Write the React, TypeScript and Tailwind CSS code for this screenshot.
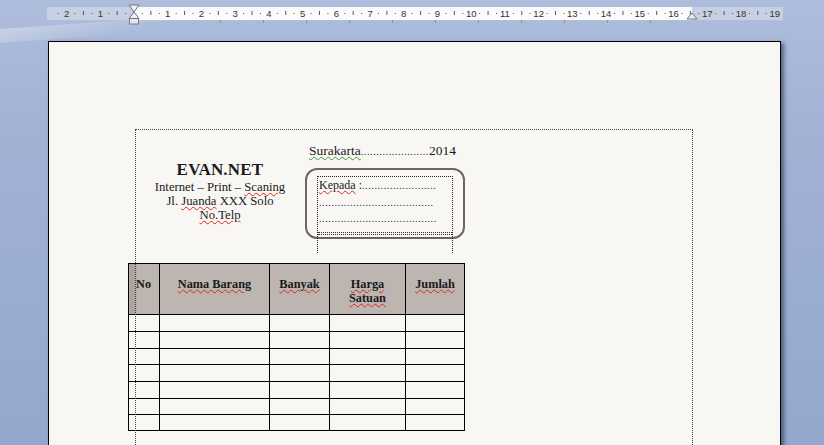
import React from 'react';

const CM = 33.72;
const ZERO = 134;

function Ruler() {
  const nums: number[] = [];
  for (let n = -2; n <= 19; n++) if (n !== 0) nums.push(n);
  const marks: { x: number; kind: 'dot' | 'tick' }[] = [];
  for (let q = -10; q <= 78; q++) {
    if (q % 4 === 0) continue;
    const x = ZERO + (q * CM) / 4;
    if (x < 50 || x > 781) continue;
    marks.push({ x, kind: q % 2 === 0 ? 'tick' : 'dot' });
  }
  const tabs = [220, 263, 306, 349, 392, 435, 478, 521, 564, 607, 650];
  return (
    <svg width="824" height="28" className="block">
      <rect x="47" y="7" width="736" height="13" fill="#c7d0e3" />
      <rect x="134" y="7" width="558" height="13" fill="#fbfbfb" />
      <line x1="47" y1="20.5" x2="783" y2="20.5" stroke="#b3bfd9" />
      {marks.map((m, i) =>
        m.kind === 'dot' ? (
          <rect key={i} x={m.x - 0.5} y={13} width="1" height="1" fill="#555" />
        ) : (
          <rect key={i} x={m.x - 0.5} y={11} width="1" height="4" fill="#555" />
        )
      )}
      {nums.map((n) => (
        <text
          key={n}
          x={ZERO + n * CM}
          y="16.5"
          textAnchor="middle"
          fontSize="9.5"
          fontFamily="'Liberation Sans', Arial, sans-serif"
          fill="#333"
        >
          {Math.abs(n)}
        </text>
      ))}
      {tabs.map((x) => (
        <rect key={x} x={x} y="20" width="1" height="3" fill="#8a8f9a" />
      ))}
      {/* left indent */}
      <polygon points="129,5 139,5 134,12" fill="#eef0f4" stroke="#6f7480" strokeWidth="1" />
      <polygon points="129,18.5 139,18.5 134,12" fill="#eef0f4" stroke="#6f7480" strokeWidth="1" />
      <rect x="129.5" y="18.5" width="9" height="5.5" fill="#dfe3ea" stroke="#6f7480" strokeWidth="1" />
      {/* right indent */}
      <polygon points="687,19 697,19 692,13" fill="#eef0f4" stroke="#6f7480" strokeWidth="1" />
    </svg>
  );
}

const squiggleRed = 'underline decoration-wavy decoration-[#e0261e] decoration-[1px] underline-offset-[1px]';
const squiggleGreen = 'underline decoration-wavy decoration-[#3a9a3a] decoration-[1px] underline-offset-[1px]';
const dots = 'text-[10px] tracking-[0.6px]';

const rowHeights = [17, 17, 16, 17, 17, 16, 16];

export default function App() {
  return (
    <div
      className="w-[824px] h-[445px] overflow-hidden relative bg-[linear-gradient(180deg,#aebddc_0%,#a1b2d5_30%,#95a7cd_100%)]"
      style={{ fontFamily: "'Liberation Serif', 'Times New Roman', serif" }}
    >
      <div className="absolute left-0 top-[22px] w-[200px] h-[14px] bg-[linear-gradient(170deg,rgba(255,255,255,0.35),rgba(255,255,255,0)_70%)] -skew-y-[4deg] pointer-events-none" />
      <Ruler />
      <div className="ml-[48px] mt-[13px] w-[733px] h-[460px] bg-[#f8f7f4] border-l border-t border-r border-black shadow-[3px_2px_4px_rgba(20,30,60,0.55)]">
        <div className="relative ml-[86px] mt-[87px] w-[558px] h-[400px]">
          <div className="flex text-[#1a1a1a]">
            <div className="w-[170px] pt-[31px] flex flex-col items-center">
              <div className="text-[17px] leading-[20px] font-bold tracking-[0.2px]">EVAN.NET</div>
              <div className="text-[12.7px] leading-[14px]">
                Internet – Print – <span className={squiggleRed}>Scaning</span>
              </div>
              <div className="text-[12.7px] leading-[14px]">
                Jl. <span className={squiggleRed}>Juanda</span> XXX Solo
              </div>
              <div className="text-[12.7px] leading-[14px]">
                <span className={squiggleRed}>No.Telp</span>
              </div>
            </div>
            <div className="pt-[14px] flex flex-col">
              <div className="pl-[4px] text-[13.5px] leading-[16px] whitespace-nowrap">
                <span className={squiggleGreen}>Surakarta</span>
                <span className={dots}>......................</span>
                2014
              </div>
              <div className="mt-[8px] w-[160px] h-[71px] rounded-[12px] border-2 border-[#6e6660] pt-[6px] pl-[10px]">
                <div className="w-[136px] h-[77px] border-l border-t border-r border-dotted border-[#222] flex flex-col">
                  <div className="pl-[1px] pt-[1px] text-[12px] leading-[14px] whitespace-nowrap">
                    <span className={squiggleRed}>Kepada</span> :<span className={dots}>........................</span>
                  </div>
                  <div className={`mt-[3px] pl-[1px] leading-[14px] whitespace-nowrap ${dots}`}>
                    .....................................
                  </div>
                  <div className={`mt-[2px] pl-[1px] leading-[14px] whitespace-nowrap ${dots}`}>
                    ......................................
                  </div>
                  <div className="mt-[6px] h-[3px] border-t border-b border-dotted border-[#333]" />
                </div>
              </div>
            </div>
          </div>

          <table className="mt-[24px] -ml-[7px] border-collapse border border-black text-[#1a1a1a]">
            <thead>
              <tr className="h-[51px] bg-[#bcb5b0] text-[12.3px] leading-[14px] font-bold">
                <th className="w-[31px] border border-black align-top pt-[13px] bg-[linear-gradient(90deg,#aaa39e_0px,#aaa39e_7px,#bcb5b0_7px)] pl-[7px] text-left">
                  No
                </th>
                <th className="w-[110px] border border-black align-top pt-[13px]">
                  <span className={squiggleRed}>Nama Barang</span>
                </th>
                <th className="w-[60px] border border-black align-top pt-[13px]">
                  <span className={squiggleRed}>Banyak</span>
                </th>
                <th className="w-[76px] border border-black align-top pt-[13px]">
                  <span className={squiggleRed}>Harga</span>
                  <br />
                  <span className={squiggleRed}>Satuan</span>
                </th>
                <th className="w-[59px] border border-black align-top pt-[13px]">
                  <span className={squiggleRed}>Jumlah</span>
                </th>
              </tr>
            </thead>
            <tbody>
              {rowHeights.map((h, i) => (
                <tr key={i} style={{ height: h }}>
                  <td className="border border-black p-0" />
                  <td className="border border-black p-0" />
                  <td className="border border-black p-0" />
                  <td className="border border-black p-0" />
                  <td className="border border-black p-0" />
                </tr>
              ))}
            </tbody>
          </table>

          {/* text boundary guide */}
          <div className="absolute inset-0 border-l border-t border-r border-dotted border-[#444] pointer-events-none" />
        </div>
      </div>
    </div>
  );
}
